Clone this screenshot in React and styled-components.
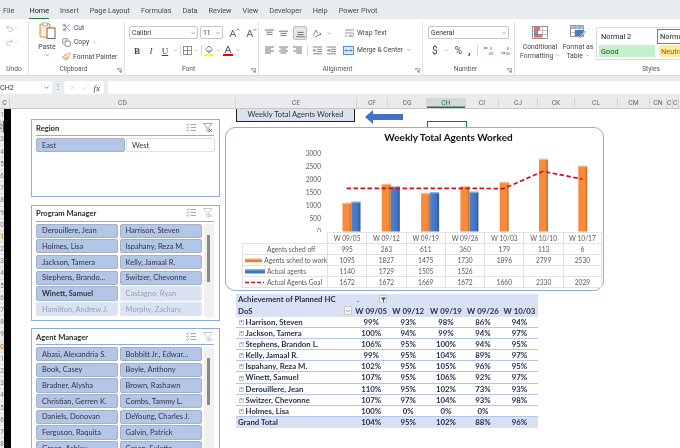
import React from 'react';
import styled, { createGlobalStyle } from 'styled-components';
import { Undo2, Redo2, Scissors, Copy, Paintbrush, ChevronDown, X, Check } from 'lucide-react';

const GlobalStyle = createGlobalStyle`
  html, body { margin: 0; padding: 0; background: #fff; }
  body { font-family: Roboto, "Liberation Sans", sans-serif; color: #333; }
`;

const Page = styled.div`
  width: 680px;
  height: 448px;
  overflow: hidden;
  background: #e8ecef;
  display: flex;
  flex-direction: column;
  filter: blur(0.3px);
`;

/* tabs */
const TabBar = styled.div`
  height: 19px;
  display: flex;
  align-items: center;
  gap: 11px;
  padding-left: 3px;
  font-size: 7.3px;
  color: #4b4b4b;
  white-space: nowrap;
`;

const Tab = styled.div`
  height: 19px;
  line-height: 21px;
  box-sizing: border-box;
  margin-left: ${p => p.$ml || 0}px;
  color: ${p => (p.$active ? '#222' : '#4b4b4b')};
  border-bottom: ${p => (p.$active ? '1.5px solid #217346' : '1.5px solid transparent')};
`;

/* ribbon */
const Ribbon = styled.div`
  height: 56px;
  background: #fff;
  display: flex;
  border-bottom: 1px solid #d9dcdf;
`;

const Group = styled.div`
  position: relative;
  width: ${p => p.$w}px;
  flex: none;
  box-sizing: border-box;
  border-right: ${p => (p.$last ? 'none' : '1px solid #e2e2e2')};
  margin-top: 3px;
  display: flex;
  flex-direction: column;
`;

const GroupBody = styled.div`
  flex: 1;
  display: flex;
  padding-left: ${p => p.$pl || 0}px;
  gap: ${p => p.$gap || 0}px;
  min-height: 0;
`;

const GroupLabel = styled.div`
  height: 11px;
  line-height: 11px;
  font-size: 6.6px;
  text-align: center;
  color: #555;
  padding-right: ${p => p.$pr || 0}px;
  padding-left: ${p => p.$pl || 0}px;
`;

const Launcher = styled.svg`
  position: absolute;
  right: 2px;
  bottom: 2px;
  width: 5px;
  height: 5px;
`;

const Stack = styled.div`
  display: flex;
  flex-direction: column;
  gap: ${p => p.$gap || 0}px;
  padding-top: ${p => p.$pt || 0}px;
  margin-top: ${p => p.$mt || 0}px;
`;

const Row = styled.div`
  display: flex;
  align-items: center;
  gap: ${p => p.$gap || 0}px;
  height: ${p => p.$h || 15}px;
  margin-left: ${p => p.$ml || 0}px;
  font-size: 6.7px;
  color: #444;
  white-space: nowrap;
`;

const Combo = styled.div`
  width: ${p => p.$w}px;
  height: 13px;
  box-sizing: border-box;
  border: 1px solid #c6c6c6;
  border-radius: 2px;
  display: flex;
  align-items: center;
  justify-content: space-between;
  padding: 0 1px 0 2px;
  font-size: 6.8px;
  color: #333;
`;

const Divider = styled.div`
  width: 1px;
  height: 11px;
  background: #d8d8d8;
`;

const LargeButton = styled.div`
  display: flex;
  flex-direction: column;
  align-items: center;
  width: ${p => p.$w}px;
  font-size: 6.8px;
  line-height: 9px;
  color: #444;
  text-align: center;
  svg.large { margin-bottom: ${p => p.$gap || 3}px; }
`;

const FontLetter = styled.span`
  font-family: "Liberation Serif", serif;
  font-size: 9px;
  width: ${p => p.$w || 12}px;
  text-align: center;
  font-weight: ${p => (p.$b ? 700 : 400)};
  font-style: ${p => (p.$i ? 'italic' : 'normal')};
  text-decoration: ${p => (p.$u ? 'underline' : 'none')};
`;

const Pressed = styled.div`
  width: 14px;
  height: 14px;
  background: #e6e6e6;
  border: 1px solid #bdbdbd;
  border-radius: 2px;
  box-sizing: border-box;
  display: flex;
  align-items: center;
  justify-content: center;
`;

const StyleGallery = styled.div`
  width: 90px;
  height: 33px;
  margin-top: 5px;
  margin-left: 2px;
  box-sizing: border-box;
  border: 1px solid #dcdcdc;
  border-radius: 2px;
  padding: 1px 0 0 2px;
  display: grid;
  grid-template-columns: 58px 28px;
  grid-template-rows: 15px 12px;
  row-gap: 1px;
  font-size: 7.4px;
`;

const StyleCell = styled.div`
  display: flex;
  align-items: center;
  padding-left: 2px;
  box-sizing: border-box;
  margin-right: ${p => p.$mr || 0}px;
  margin-left: ${p => p.$ml || 0}px;
  overflow: hidden;
  background: ${p => p.$bg || 'transparent'};
  color: ${p => p.$color || '#222'};
  border: ${p => (p.$picked ? '1px solid #7a7a7a' : 'none')};
`;

/* formula bar */
const FormulaBar = styled.div`
  height: 13px;
  margin-top: 5px;
  display: flex;
  align-items: stretch;
  flex: none;
`;

const NameBox = styled.div`
  width: 52px;
  background: #fff;
  border-radius: 0 2px 2px 0;
  font-size: 7.2px;
  color: #333;
  display: flex;
  align-items: center;
  justify-content: space-between;
  padding-right: 2px;
  box-sizing: border-box;
`;

const Grip = styled.div`
  width: 12px;
  text-align: center;
  font-size: 8px;
  line-height: 12px;
  color: #777;
`;

const FxBox = styled.div`
  width: 40px;
  background: #fff;
  border-radius: 2px;
  display: flex;
  align-items: center;
  justify-content: space-around;
  padding: 0 2px;
  box-sizing: border-box;
  color: #bbb;
`;

const Fx = styled.span`
  font-family: "Liberation Serif", serif;
  font-style: italic;
  font-size: 9px;
  color: #444;
`;

const FormulaInput = styled.div`
  flex: 1;
  margin-left: 4px;
  background: #fff;
  border-radius: 2px 0 0 2px;
`;

/* column headers */
const ColumnBar = styled.div`
  height: 11px;
  margin-top: 4px;
  flex: none;
  display: flex;
  background: #e9ebed;
  border-bottom: 1px solid #c8c8c8;
  box-sizing: border-box;
`;

const ColumnHead = styled.div`
  width: ${p => p.$w}px;
  flex: none;
  overflow: hidden;
  text-align: center;
  font-size: 6.8px;
  line-height: 11px;
  color: ${p => (p.$active ? '#217346' : '#666')};
  background: ${p => (p.$active ? '#d5d9dc' : 'transparent')};
  box-shadow: ${p => (p.$active ? 'inset 0 -1.5px 0 #217346' : 'none')};
  border-right: 1px solid ${p => (p.$active ? 'transparent' : '#d4d4d4')};
  box-sizing: border-box;
`;

/* sheet */
const Sheet = styled.div`
  position: relative;
  flex: 1;
  min-height: 0;
  overflow: hidden;
  background: #fff;
  display: flex;
`;

const RowHeads = styled.div`
  width: 4px;
  flex: none;
  background: #eceef0;
  display: flex;
  flex-direction: column;
  overflow: hidden;
`;

const RowHead = styled.div`
  height: 12.2px;
  flex: none;
  display: flex;
  justify-content: flex-end;
  font-size: 6.5px;
  line-height: 12px;
  color: #777;
  border-bottom: 1px solid #dcdcdc;
  box-sizing: border-box;
  background: ${p => (p.$active ? '#d5d9dc' : p.$warm ? '#f8e3c2' : 'transparent')};
  border-right: ${p => (p.$active ? '1px solid #217346' : 'none')};
`;

const BlackBar = styled.div`
  width: 6.5px;
  flex: none;
  background: #000;
`;

const SlicerColumn = styled.div`
  width: 189px;
  flex: none;
  margin-left: 20px;
  padding-top: 10px;
  display: flex;
  flex-direction: column;
  gap: 7.5px;
`;

const Slicer = styled.div`
  height: ${p => p.$h}px;
  flex: none;
  box-sizing: border-box;
  border: 1px solid #8faadc;
  background: #fff;
  padding: 0 5px 0 4.5px;
  overflow: hidden;
`;

const SlicerHead = styled.div`
  height: 15px;
  display: flex;
  align-items: center;
  justify-content: space-between;
  border-bottom: 1px solid #8faadc;
  box-sizing: content-box;
  margin-bottom: 2px;
  font-family: Lato, "Liberation Sans", sans-serif;
  font-size: 7.6px;
  font-weight: 700;
  color: #2b2b2b;
`;

const SlicerTools = styled.div`
  display: flex;
  gap: 7px;
  padding-right: 1px;
`;

const SlicerBody = styled.div`
  display: flex;
  justify-content: space-between;
`;

const SlicerGrid = styled.div`
  flex: 1;
  display: grid;
  grid-template-columns: ${p => (p.$wide ? '88.5px 88.5px' : '82px 82px')};
  grid-auto-rows: 14.3px;
  column-gap: 1.5px;
  row-gap: 1.4px;
`;

const SlicerItem = styled.div`
  box-sizing: border-box;
  border-radius: 2px;
  display: flex;
  align-items: center;
  padding-left: 5px;
  font-family: Lato, "Liberation Sans", sans-serif;
  font-size: 7.5px;
  white-space: nowrap;
  overflow: hidden;
  color: ${p => (p.$state === 'muted' ? '#9a9fa8' : '#2f3440')};
  font-weight: ${p => (p.$hot ? 700 : 400)};
  background: ${p => (p.$state === 'muted' ? '#dae3f3' : p.$state === 'off' ? '#fff' : '#b4c6e7')};
  border: 1px solid ${p => (p.$state === 'off' ? '#e0e0e0' : p.$state === 'muted' ? '#e2e8f3' : '#a4b0c6')};
`;

const ScrollTrack = styled.div`
  width: 10px;
  height: ${p => p.$h}px;
  flex: none;
  background: #f0f0f0;
  display: flex;
  justify-content: center;
  padding-top: 11px;
  box-sizing: border-box;
`;

const ScrollThumb = styled.div`
  width: 2.5px;
  height: 47px;
  background: #8a8a8a;
`;

const MainColumn = styled.div`
  width: 379px;
  flex: none;
  margin-left: 5.5px;
  display: flex;
  flex-direction: column;
`;

const TitleRow = styled.div`
  height: 12.5px;
  flex: none;
  display: flex;
  gap: 10px;
  margin-left: 11px;
`;

const TitleCell = styled.div`
  width: 119px;
  box-sizing: border-box;
  background: #d9e1f2;
  border: 1px solid #222;
  border-top: none;
  border-bottom-width: 1.5px;
  text-align: center;
  font-family: Lato, "Liberation Sans", sans-serif;
  font-size: 7.6px;
  line-height: 11px;
  color: #333;
`;

const Selection = styled.div`
  position: absolute;
  left: 426.5px;
  top: 12px;
  width: 40px;
  height: 16px;
  box-sizing: border-box;
  border: 1px solid #217346;
`;

const ChartCard = styled.div`
  position: relative;
  z-index: 1;
  margin-top: 5.5px;
  height: 163.5px;
  flex: none;
  box-sizing: border-box;
  border: 1px solid #8faadc;
  border-radius: 10px;
  background: #fff;
  font-family: Lato, "Liberation Sans", sans-serif;
`;

const ChartTitle = styled.div`
  height: 17px;
  line-height: 18px;
  text-align: center;
  padding-left: 68px;
  font-size: 10px;
  font-weight: 700;
  color: #111;
`;

const PlotSvg = styled.svg`
  display: block;
  width: 376px;
  height: 87px;
  text { font-family: Lato, "Liberation Sans", sans-serif; }
`;

const DataTable = styled.div`
  margin-left: 16px;
  display: grid;
  grid-template-columns: 85px repeat(7, 39.3px);
  grid-auto-rows: 11px;
  border-bottom: 1px solid #e2e2e2;
  width: max-content;
`;

const DataCell = styled.div`
  box-sizing: border-box;
  display: flex;
  align-items: center;
  justify-content: center;
  font-size: 6.6px;
  color: #595959;
  border-top: 1px solid #e2e2e2;
  border-left: 1px solid #e2e2e2;
  &:nth-child(8n) { border-right: 1px solid #e2e2e2; }
`;

const BlankCell = styled.div``;

const LegendCell = styled(DataCell)`
  justify-content: flex-start;
  white-space: nowrap;
  gap: 2px;
  padding-left: ${p => p.$pl || 2}px;
`;

const Pivot = styled.div`
  margin: 3px 0 0 11px;
  width: 302px;
  font-family: Lato, "Liberation Sans", sans-serif;
  font-size: 7.8px;
  font-weight: 700;
  color: #26304a;
`;

const PivotRow = styled.div`
  display: grid;
  grid-template-columns: 117px 36.5px 37.5px 38px 36px 37px;
  height: ${p => p.$h || 11.2}px;
  line-height: ${p => p.$h || 11.2}px;
  box-sizing: border-box;
  background: ${p => (p.$fill ? '#d9e1f2' : '#fff')};
  border-bottom: ${p => (p.$fill ? 'none' : '1px solid #b4c6e7')};
  white-space: nowrap;
`;

const PivotName = styled.div`
  display: flex;
  align-items: center;
  justify-content: ${p => (p.$between ? 'space-between' : 'flex-start')};
  padding-left: 2px;
  padding-right: ${p => (p.$between ? 1 : 0)}px;
  gap: 1.5px;
`;

const PivotValue = styled.div`
  text-align: center;
`;

const ExpandBox = styled.span`
  width: 5px;
  height: 5px;
  margin-left: 1px;
  box-sizing: border-box;
  border: 1px solid #c4c8d0;
  font-size: 5px;
  line-height: 3px;
  text-align: center;
  font-weight: 400;
  color: #777;
`;

const FilterButton = styled.span`
  width: 8.5px;
  height: 8.5px;
  box-sizing: border-box;
  background: #f2f2f2;
  border: 1px solid #c9c9c9;
  border-radius: 1px;
  display: flex;
  align-items: center;
  justify-content: center;
`;

const PivotFilterCell = styled.div`
  display: flex;
  align-items: center;
  gap: 20px;
  padding-left: 4px;
  grid-column: span 2;
`;

/* small drawings */
const Chev = ({ s = 6, c = '#666' }) => <ChevronDown size={s} color={c} strokeWidth={2} />;

const LinesIcon = ({ rows, w = 9 }) => (
  <svg width={w} height={9} viewBox="0 0 9 9">
    {rows.map(([x1, x2, y], i) => (
      <line key={i} x1={x1} x2={x2} y1={y} y2={y} stroke="#666" strokeWidth="0.9" />
    ))}
  </svg>
);

const alignTop = [[0, 9, 1], [1.5, 7.5, 3.2], [1.5, 7.5, 5.4]];
const alignMid = [[0, 9, 2.2], [1.5, 7.5, 4.4], [1.5, 7.5, 6.6]];
const alignBottom = [[1.5, 7.5, 3.4], [1.5, 7.5, 5.6], [0, 9, 7.8]];
const alignLeft = [[0, 9, 1], [0, 6, 3], [0, 9, 5], [0, 6, 7]];
const alignCenter = [[0, 9, 1], [1.5, 7.5, 3], [0, 9, 5], [1.5, 7.5, 7]];
const alignRight = [[0, 9, 1], [3, 9, 3], [0, 9, 5], [3, 9, 7]];

const IndentIcon = ({ flip }) => (
  <svg width={9} height={9} viewBox="0 0 9 9">
    <g stroke="#666" strokeWidth="0.8">
      <line x1="0" x2="9" y1="1" y2="1" />
      <line x1="4" x2="9" y1="3.3" y2="3.3" />
      <line x1="4" x2="9" y1="5.5" y2="5.5" />
      <line x1="0" x2="9" y1="7.8" y2="7.8" />
    </g>
    <path d={flip ? 'M0 4.4h3M1.8 3l1.4 1.4L1.8 5.8' : 'M3 4.4H0M1.4 3L0 4.4l1.4 1.4'} stroke="#2f75c0" strokeWidth="0.8" fill="none" />
  </svg>
);

const LaunchIcon = () => (
  <Launcher viewBox="0 0 5 5">
    <path d="M.5 2V.5H4.5V4.5H3M1 1l2.5 2.5M3.6 2v1.6H2" stroke="#777" strokeWidth="0.6" fill="none" />
  </Launcher>
);

const PasteIcon = () => (
  <svg className="large" width="17" height="17" viewBox="0 0 17 17">
    <rect x="1" y="2" width="10" height="13" rx="1" fill="#fbeedd" stroke="#d88a2c" />
    <rect x="3.5" y="0.8" width="5" height="3" rx="0.6" fill="#fff" stroke="#8a8a8a" strokeWidth="0.7" />
    <rect x="8" y="6" width="8" height="10.5" fill="#fff" stroke="#555" strokeWidth="0.9" />
  </svg>
);

const BorderIcon = () => (
  <svg width="9" height="9" viewBox="0 0 9 9" fill="none" stroke="#777" strokeWidth="0.8">
    <rect x="0.5" y="0.5" width="8" height="8" />
    <path d="M4.5 .5v8M.5 4.5h8" />
  </svg>
);

const FillIcon = () => (
  <svg width="10" height="11" viewBox="0 0 10 11">
    <path d="M5 1l3.5 3.5L5 8 1.5 4.5z" fill="#fff" stroke="#666" strokeWidth="0.8" />
    <path d="M2.5 5h5L5 7.6z" fill="#8fbce6" />
    <rect x="0" y="9" width="10" height="2" fill="#ffff00" />
  </svg>
);

const FontColorIcon = () => (
  <svg width="10" height="11" viewBox="0 0 10 11">
    <path d="M2 8l3-7 3 7M3.2 5.6h3.6" stroke="#444" strokeWidth="0.9" fill="none" />
    <rect x="0" y="9" width="10" height="2" fill="#e00" />
  </svg>
);

const GrowIcon = ({ up }) => (
  <svg width="11" height="10" viewBox="0 0 11 10">
    <path d="M.8 9L3.8 2l3 7M1.9 6.6h3.8" stroke="#555" strokeWidth="0.9" fill="none" />
    <path d={up ? 'M7.5 2.5L9 1l1.5 1.5' : 'M7.5 1L9 2.5 10.5 1'} stroke="#2f75c0" strokeWidth="0.8" fill="none" />
  </svg>
);

const OrientIcon = () => (
  <svg width="10" height="9" viewBox="0 0 10 9" fill="none">
    <path d="M1 7L4 1l2 4" stroke="#777" strokeWidth="0.8" />
    <path d="M3 8l6-3M7.5 3.8L9 5 7.8 6.5" stroke="#2f75c0" strokeWidth="0.8" />
  </svg>
);

const WrapIcon = () => (
  <svg width="9" height="9" viewBox="0 0 9 9" fill="none">
    <path d="M0 1h9M0 4h7.5a1.5 1.5 0 010 3H4.5M0 7h2.5" stroke="#777" strokeWidth="0.8" />
    <path d="M5.6 5.8L4.4 7l1.2 1.2" stroke="#2f75c0" strokeWidth="0.8" />
  </svg>
);

const MergeIcon = () => (
  <svg width="11" height="9" viewBox="0 0 11 9" fill="none">
    <rect x="0.5" y="0.5" width="10" height="8" stroke="#2f75c0" strokeWidth="0.8" fill="#dfeaf7" />
    <path d="M2 4.5h7M3.5 3L2 4.5 3.5 6M7.5 3L9 4.5 7.5 6" stroke="#2f75c0" strokeWidth="0.7" />
  </svg>
);

const DecimalIcon = ({ inc }) => (
  <svg width="11" height="9" viewBox="0 0 11 9" fill="none">
    <path d={inc ? 'M4 2H0M1.4.8L0 2l1.4 1.2' : 'M0 7h4M2.6 5.8L4 7 2.6 8.2'} stroke="#2f75c0" strokeWidth="0.8" />
    <text x="5" y="4" fontSize="4" fill="#666">.0</text>
    <text x="4" y="8.5" fontSize="4" fill="#666">.00</text>
  </svg>
);

const CondIcon = () => (
  <svg className="large" width="16" height="13" viewBox="0 0 16 13">
    <rect x="0.5" y="0.5" width="15" height="12" fill="#fff" stroke="#666" strokeWidth="0.7" />
    <rect x="2" y="1" width="6" height="3.5" fill="#ee6a6a" />
    <rect x="2" y="4.5" width="4" height="3.5" fill="#5f9ad8" />
    <rect x="2" y="8" width="8" height="3.5" fill="#ee6a6a" />
    <path d="M5.5 .5v12M10.5 .5v12M.5 4.5h15M.5 8.5h15" stroke="#777" strokeWidth="0.4" />
  </svg>
);

const TableIcon = () => (
  <svg className="large" width="16" height="14" viewBox="0 0 16 14">
    <rect x="0.5" y="0.5" width="13" height="11" fill="#fff" stroke="#666" strokeWidth="0.7" />
    <rect x="0.5" y="0.5" width="13" height="3" fill="#9fbfe3" />
    <rect x="5" y="5" width="8" height="6" fill="#3f7fcf" />
    <path d="M5 .5v11M9.5 .5v11M.5 3.5h13M.5 7.5h13" stroke="#777" strokeWidth="0.4" />
    <path d="M9 12.5l5.5-6.5 1 1L10 13z" fill="#fff" stroke="#666" strokeWidth="0.6" />
  </svg>
);

const ChecklistIcon = () => (
  <svg width="10" height="9" viewBox="0 0 10 9" fill="none" stroke="#8c8c8c" strokeWidth="0.8">
    <path d="M.5 1.4l1 1L3 .5M.5 4.4l1 1L3 3.5M.5 7.4l1 1L3 6.5M4.5 1.5H10M4.5 4.5H10M4.5 7.5H10" />
  </svg>
);

const ClearFilterIcon = ({ on }) => (
  <svg width="10" height="10" viewBox="0 0 10 10" fill="none">
    <path d="M.5.5h8.5L5.8 4.5V9L3.8 7.8V4.5z" stroke={on ? '#8c8c8c' : '#bcbcbc'} strokeWidth="0.8" fill="#fff" />
    <path d="M6 6l3 3M9 6L6 9" stroke={on ? '#e04040' : '#c4c4c4'} strokeWidth="0.9" />
  </svg>
);

const FunnelMini = ({ c = '#444' }) => (
  <svg width="5" height="5" viewBox="0 0 5 5"><path d="M0 .5h5L3 3v2L2 4.4V3z" fill={c} /></svg>
);

const BlueArrow = () => (
  <svg width="39" height="14" viewBox="0 0 39 14" style={{ flex: 'none', marginTop: 1 }}>
    <path d="M0 7L8 0v4h30v6H8v4z" fill="#4472c4" />
  </svg>
);

/* data */
const tabs = ['Insert', 'Page Layout', 'Formulas', 'Data', 'Review', 'View', 'Developer', 'Help', 'Power Pivot'];

const columns = [
  ['C', 10], ['CD', 226], ['CE', 121], ['CF', 31], ['CG', 39], ['CH', 39, true], ['CI', 33], ['CJ', 39], ['CK', 37],
  ['CL', 43], ['CM', 32], ['CN', 17], ['CI', 6], ['CF', 6],
];

const programManagers = [
  ['Derouillere, Jean'], ['Harrison, Steven'], ['Holmes, Lisa'], ['Ispahany, Reza M.'],
  ['Jackson, Tamera'], ['Kelly, Jamaal R.'], ['Stephens, Brando...'], ['Switzer, Chevonne'],
  ['Winett, Samuel', 'on', true], ['Castagno, Ryan', 'muted'], ['Hamilton, Andrew J.', 'muted'], ['Murphy, Zachary', 'muted'],
];

const agentManagers = [
  'Abasi, Alexandria S.', 'Bobbitt Jr., Edwar...', 'Book, Casey', 'Boyle, Anthony', 'Bradner, Alysha', 'Brown, Rashawn',
  'Christian, Gerren K.', 'Combs, Tammy L.', 'Daniels, Donovan', 'DeYoung, Charles J.', 'Ferguson, Raquita', 'Galvin, Patrick',
  'Green, Ashley', 'Green, Euletta',
].map(name => [name]);

const weeks = ['W 09/05', 'W 09/12', 'W 09/19', 'W 09/26', 'W 10/03', 'W 10/10', 'W 10/17'];
const schedOff = [995, 263, 611, 360, 179, 113, 6];
const schedWork = [1095, 1827, 1475, 1730, 1896, 2799, 2530];
const actual = [1140, 1729, 1505, 1526, '', '', ''];
const goal = [1672, 1672, 1669, 1672, 1660, 2330, 2029];

const pivotRows = [
  ['Harrison, Steven', '99%', '93%', '98%', '86%', '94%'],
  ['Jackson, Tamera', '100%', '94%', '99%', '94%', '97%'],
  ['Stephens, Brandon L.', '106%', '95%', '100%', '94%', '95%'],
  ['Kelly, Jamaal R.', '99%', '95%', '104%', '89%', '97%'],
  ['Ispahany, Reza M.', '102%', '95%', '105%', '96%', '95%'],
  ['Winett, Samuel', '107%', '95%', '106%', '92%', '97%'],
  ['Derouillere, Jean', '110%', '95%', '102%', '73%', '93%'],
  ['Switzer, Chevonne', '107%', '97%', '104%', '93%', '98%'],
  ['Holmes, Lisa', '100%', '0%', '0%', '0%', ''],
];

const rowNumbers = Array.from({ length: 28 }, (_, i) => i + 1);

/* chart geometry, in pixels of the plot svg */
const baseY = 86.5;
const valueY = v => baseY - (v * 77.5) / 3000;
const catX = i => 121.5 + i * 39.3;

const Plot = () => (
  <PlotSvg viewBox="0 0 376 87">
    <defs>
      <linearGradient id="orangeBar" x1="0" x2="1" y1="0" y2="0">
        <stop offset="0" stopColor="#f58a3d" />
        <stop offset="0.7" stopColor="#fb8b38" />
        <stop offset="1" stopColor="#b9742f" />
      </linearGradient>
      <linearGradient id="blueBar" x1="0" x2="1" y1="0" y2="0">
        <stop offset="0" stopColor="#4f81d0" />
        <stop offset="0.7" stopColor="#4472c4" />
        <stop offset="1" stopColor="#2e5597" />
      </linearGradient>
    </defs>
    {[0, 500, 1000, 1500, 2000, 2500, 3000].map(v => (
      <text key={v} x="95" y={valueY(v) + 2.4} fontSize="6.6" textAnchor="end" fill="#595959">{v}</text>
    ))}
    {schedWork.map((v, i) => (
      <g key={i}>
        <rect x={catX(i) - 5} y={valueY(v)} width="9" height={baseY - valueY(v)} fill="url(#orangeBar)" />
        <rect x={catX(i) - 5} y={valueY(v) - 0.6} width="9" height="1.4" fill="#f7b98c" />
      </g>
    ))}
    {actual.map((v, i) => v !== '' && (
      <g key={i}>
        <rect x={catX(i) + 4} y={valueY(v)} width="9" height={baseY - valueY(v)} fill="url(#blueBar)" />
        <rect x={catX(i) + 4} y={valueY(v) - 0.6} width="9" height="1.4" fill="#8fb0e2" />
      </g>
    ))}
    <polyline
      points={goal.map((v, i) => `${catX(i) - 1},${valueY(v)}`).join(' ')}
      fill="none"
      stroke="#d4111b"
      strokeWidth="1.7"
      strokeDasharray="4.5 2.5"
    />
  </PlotSvg>
);

const Swatch = ({ color, edge }) => (
  <svg width="20" height="5" viewBox="0 0 20 5">
    <rect x="0" y="0.5" width="20" height="4" fill={color} />
    <rect x="0" y="0.5" width="20" height="1.2" fill={edge} />
  </svg>
);

const DashSwatch = () => (
  <svg width="20" height="5" viewBox="0 0 20 5">
    <line x1="0" x2="19" y1="2.5" y2="2.5" stroke="#d4111b" strokeWidth="1.5" strokeDasharray="4 2" />
  </svg>
);

const SlicerPanel = ({ title, items, h, trackH, on }) => (
  <Slicer $h={h}>
    <SlicerHead>
      {title}
      <SlicerTools>
        <ChecklistIcon />
        <ClearFilterIcon on={on} />
      </SlicerTools>
    </SlicerHead>
    <SlicerBody>
      <SlicerGrid>
        {items.map(([name, state, hot]) => (
          <SlicerItem key={name} $state={state} $hot={hot}>{name}</SlicerItem>
        ))}
      </SlicerGrid>
      <ScrollTrack $h={trackH}><ScrollThumb /></ScrollTrack>
    </SlicerBody>
  </Slicer>
);

const App = () => (
  <Page>
    <GlobalStyle />
    <TabBar>
      <Tab>File</Tab>
      <Tab $active $ml={4}>Home</Tab>
      {tabs.map(t => <Tab key={t}>{t}</Tab>)}
    </TabBar>

    <Ribbon>
      <Group $w={29}>
        <GroupBody $pl={5}>
          <Stack $mt={-1}>
            <Row $h={14}><Undo2 size={9} color="#b8b8b8" /><Chev s={5} c="#bbb" /></Row>
            <Row $h={14}><Redo2 size={9} color="#b8b8b8" /><Chev s={5} c="#bbb" /></Row>
          </Stack>
        </GroupBody>
        <GroupLabel>Undo</GroupLabel>
      </Group>

      <Group $w={96}>
        <GroupBody $pl={6} $gap={3}>
          <LargeButton $w={24} $gap={4}>
            <PasteIcon />
            Paste
            <Chev s={6} />
          </LargeButton>
          <Stack $mt={-1.5}>
            <Row $gap={3}><Scissors size={9} color="#5b7fb0" />Cut</Row>
            <Row $gap={3}><Copy size={9} color="#666" />Copy <Chev s={5} /></Row>
            <Row $gap={2}><Paintbrush size={9} color="#d88a2c" />Format Painter</Row>
          </Stack>
        </GroupBody>
        <GroupLabel $pr={6}>Clipboard</GroupLabel>
        <LaunchIcon />
      </Group>

      <Group $w={134}>
        <GroupBody $pl={4}>
          <Stack $pt={4} $gap={5}>
            <Row $gap={2} $h={13}>
              <Combo $w={69}>Calibri<Chev s={6} /></Combo>
              <Combo $w={23}>11<Chev s={6} /></Combo>
              <span style={{ width: 2 }} />
              <GrowIcon up />
              <span style={{ width: 2 }} />
              <GrowIcon />
            </Row>
            <Row $h={13} $gap={2} $ml={2}>
              <FontLetter $b>B</FontLetter>
              <FontLetter $i>I</FontLetter>
              <FontLetter $u>U</FontLetter>
              <Chev s={5} />
              <Divider />
              <BorderIcon />
              <Chev s={5} />
              <Divider />
              <FillIcon />
              <Chev s={5} />
              <FontColorIcon />
              <Chev s={5} />
            </Row>
          </Stack>
        </GroupBody>
        <GroupLabel $pr={6}>Font</GroupLabel>
        <LaunchIcon />
      </Group>

      <Group $w={164}>
        <GroupBody $pl={6} $gap={7}>
          <Stack $pt={4} $gap={4}>
            <Row $h={14} $gap={5}>
              <LinesIcon rows={alignTop} />
              <LinesIcon rows={alignMid} />
              <Pressed><LinesIcon rows={alignBottom} /></Pressed>
              <OrientIcon />
              <Chev s={5} />
            </Row>
            <Row $h={12} $gap={5}>
              <LinesIcon rows={alignLeft} />
              <LinesIcon rows={alignCenter} />
              <LinesIcon rows={alignRight} />
              <Divider />
              <IndentIcon />
              <IndentIcon flip />
            </Row>
          </Stack>
          <Stack $pt={4} $gap={4}>
            <Row $h={14} $gap={3} $ml={2}><WrapIcon />Wrap Text</Row>
            <Row $h={12} $gap={3}><MergeIcon />Merge &amp; Center<Chev s={6} /></Row>
          </Stack>
        </GroupBody>
        <GroupLabel $pr={6}>Alignment</GroupLabel>
        <LaunchIcon />
      </Group>

      <Group $w={92}>
        <GroupBody $pl={5}>
          <Stack $pt={4} $gap={5}>
            <Combo $w={81}>General<Chev s={6} /></Combo>
            <Row $h={13} $gap={6} $ml={4}>
              <span style={{ fontSize: 10 }}>$</span>
              <Chev s={5} />
              <span style={{ fontSize: 10 }}>%</span>
              <span style={{ fontSize: 11, fontWeight: 700, lineHeight: '8px' }}>,</span>
              <Divider />
              <DecimalIcon inc />
              <DecimalIcon />
            </Row>
          </Stack>
        </GroupBody>
        <GroupLabel $pr={6}>Number</GroupLabel>
        <LaunchIcon />
      </Group>

      <Group $w={165} $last>
        <GroupBody $pl={3}>
          <Stack $pt={4}>
            <LargeButton $w={44} $gap={4}>
              <CondIcon />
              Conditional
              <span>Formatting <Chev s={5} /></span>
            </LargeButton>
          </Stack>
          <Stack $pt={3}>
            <LargeButton $w={32} $gap={4}>
              <TableIcon />
              Format as
              <span>Table <Chev s={5} /></span>
            </LargeButton>
          </Stack>
          <StyleGallery>
            <StyleCell>Normal 2</StyleCell>
            <StyleCell $picked>Normal</StyleCell>
            <StyleCell $bg="#c6efce" $color="#006100" $mr={2}>Good</StyleCell>
            <StyleCell $bg="#ffeb9c" $color="#9c5700" $ml={2}>Neutral</StyleCell>
          </StyleGallery>
        </GroupBody>
        <GroupLabel $pl={107}>Styles</GroupLabel>
      </Group>
    </Ribbon>

    <FormulaBar>
      <NameBox>CH2<Chev s={7} c="#444" /></NameBox>
      <Grip>⋮</Grip>
      <FxBox>
        <X size={9} strokeWidth={1.2} />
        <Check size={9} strokeWidth={1.2} />
        <Fx>fx</Fx>
      </FxBox>
      <FormulaInput />
    </FormulaBar>

    <ColumnBar>
      {columns.map(([name, w, active], i) => (
        <ColumnHead key={i} $w={w} $active={active}>{name}</ColumnHead>
      ))}
    </ColumnBar>

    <Sheet>
      <RowHeads>
        {rowNumbers.map(n => (
          <RowHead key={n} $active={n === 2} $warm={n === 11 || n === 20}>{n}</RowHead>
        ))}
      </RowHeads>
      <BlackBar />
      <SlicerColumn>
        <Slicer $h={78}>
          <SlicerHead>
            Region
            <SlicerTools>
              <ChecklistIcon />
              <ClearFilterIcon on />
            </SlicerTools>
          </SlicerHead>
          <SlicerGrid $wide>
            <SlicerItem>East</SlicerItem>
            <SlicerItem $state="off">West</SlicerItem>
          </SlicerGrid>
        </Slicer>
        <SlicerPanel title="Program Manager" items={programManagers} h={116} trackH={93} />
        <SlicerPanel title="Agent Manager" items={agentManagers} h={130} trackH={110} />
      </SlicerColumn>

      <MainColumn>
        <TitleRow>
          <TitleCell>Weekly Total Agents Worked</TitleCell>
          <BlueArrow />
        </TitleRow>
        <ChartCard>
          <ChartTitle>Weekly Total Agents Worked</ChartTitle>
          <Plot />
          <DataTable>
            <BlankCell />
            {weeks.map(w => <DataCell key={w}>{w}</DataCell>)}
            <LegendCell $pl={24}>Agents sched off</LegendCell>
            {schedOff.map((v, i) => <DataCell key={i}>{v}</DataCell>)}
            <LegendCell><Swatch color="#ed7d31" edge="#f9b27c" />Agents sched to work</LegendCell>
            {schedWork.map((v, i) => <DataCell key={i}>{v}</DataCell>)}
            <LegendCell><Swatch color="#4472c4" edge="#7d9fdc" />Actual agents</LegendCell>
            {actual.map((v, i) => <DataCell key={i}>{v}</DataCell>)}
            <LegendCell><DashSwatch />Actual Agents Goal</LegendCell>
            {goal.map((v, i) => <DataCell key={i}>{v}</DataCell>)}
          </DataTable>
        </ChartCard>
        <Pivot>
          <PivotRow $fill $h={11}>
            <PivotName>Achievement of Planned HC</PivotName>
            <PivotFilterCell>
              <span>.</span>
              <FilterButton><FunnelMini /></FilterButton>
            </PivotFilterCell>
          </PivotRow>
          <PivotRow $h={12} $fill>
            <PivotName $between>
              DoS
              <FilterButton><Chev s={6} c="#555" /></FilterButton>
            </PivotName>
            {weeks.slice(0, 5).map(w => <PivotValue key={w}>{w}</PivotValue>)}
          </PivotRow>
          {pivotRows.map(([name, ...values]) => (
            <PivotRow key={name}>
              <PivotName><ExpandBox>+</ExpandBox>{name}</PivotName>
              {values.map((v, i) => <PivotValue key={i}>{v}</PivotValue>)}
            </PivotRow>
          ))}
          <PivotRow $fill>
            <PivotName>Grand Total</PivotName>
            {['104%', '95%', '102%', '88%', '96%'].map((v, i) => <PivotValue key={i}>{v}</PivotValue>)}
          </PivotRow>
        </Pivot>
      </MainColumn>
      <Selection />
    </Sheet>
  </Page>
);

export default App;
